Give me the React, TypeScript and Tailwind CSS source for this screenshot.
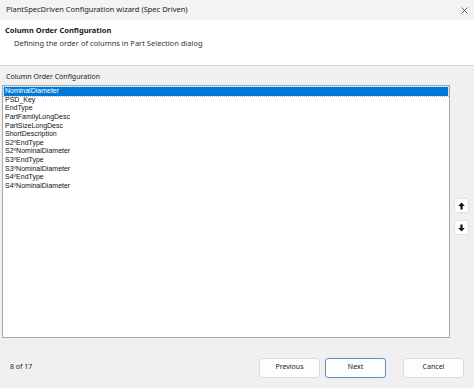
import React from "react";

const columns = [
  "NominalDiameter",
  "PSD_Key",
  "EndType",
  "PartFamilyLongDesc",
  "PartSizeLongDesc",
  "ShortDescription",
  "S2ºEndType",
  "S2ºNominalDiameter",
  "S3ºEndType",
  "S3ºNominalDiameter",
  "S4ºEndType",
  "S4ºNominalDiameter",
];

function ArrowButton({ up }: { up?: boolean }) {
  return (
    <button className="w-[15px] h-[15px] bg-white border border-[#e1e1e1] rounded-[2px] flex items-center justify-center">
      <svg width="7" height="8" viewBox="0 0 7 8" className={up ? "" : "rotate-180"}>
        <path d="M3.5 0.5 L6.8 4 H4.6 V7.6 H2.4 V4 H0.2 Z" fill="#111" />
      </svg>
    </button>
  );
}

function WizardButton({ label, primary }: { label: string; primary?: boolean }) {
  return (
    <button
      className={
        "h-[20px] w-[61px] rounded-[3px] bg-[#fdfdfd] text-[7px] text-[#1b1b1b] flex items-center justify-center " +
        (primary ? "border border-[#5b8fc7]" : "border border-[#dcdcdc]")
      }
    >
      {label}
    </button>
  );
}

export default function App() {
  return (
    <div className="w-[474px] h-[388px] bg-[#f0f0f0] flex flex-col overflow-hidden font-['Noto_Sans',sans-serif] text-[#1a1a1a]">
      {/* title bar */}
      <div className="h-[20px] bg-[#f3f3f3] flex items-center justify-between pl-[6px] pr-[6px]">
        <span className="text-[7.5px] text-[#222]">PlantSpecDriven Configuration wizard (Spec Driven)</span>
        <svg width="7" height="7" viewBox="0 0 7 7">
          <path d="M0.5 0.5 L6.5 6.5 M6.5 0.5 L0.5 6.5" stroke="#333" strokeWidth="0.8" />
        </svg>
      </div>

      {/* header */}
      <div className="h-[46px] bg-white border-b border-[#d5d5d5] pl-[5px] pt-[5px]">
        <div className="text-[7.5px] font-bold leading-[10px]">Column Order Configuration</div>
        <div className="text-[7.5px] leading-[10px] mt-[3px] pl-[9px] text-[#333]">
          Defining the order of columns in Part Selection dialog
        </div>
      </div>

      {/* body */}
      <div className="flex-1 flex flex-col">
        <div className="h-[19px] pl-[6px] pt-[6px] text-[7px] leading-[10px] text-[#222]">
          Column Order Configuration
        </div>
        <div className="flex pl-[2px]">
          <div className="w-[448px] h-[253px] bg-white border border-[#a9a9a9] p-[1px] font-['Liberation_Sans',sans-serif] text-[7px] leading-[8.64px]">
            {columns.map((c, i) => (
              <div
                key={c}
                className={
                  "pl-[1px] " +
                  (i === 0 ? "bg-[#0078d7] text-white outline outline-[0.5px] outline-dotted outline-[#9cc6ee]" : "text-[#111]")
                }
              >
                {c}
              </div>
            ))}
          </div>
          <div className="flex flex-col gap-[7px] pl-[4px] pt-[113px]">
            <ArrowButton up />
            <ArrowButton />
          </div>
        </div>

        {/* footer */}
        <div className="flex-1 flex items-center pl-[10px] pr-[10px] pt-[9px]">
          <span className="text-[7px] text-[#222]">8 of 17</span>
          <div className="ml-auto flex items-center">
            <WizardButton label="Previous" />
            <div className="w-[5px]" />
            <WizardButton label="Next" primary />
            <div className="w-[17px]" />
            <WizardButton label="Cancel" />
          </div>
        </div>
      </div>
    </div>
  );
}
